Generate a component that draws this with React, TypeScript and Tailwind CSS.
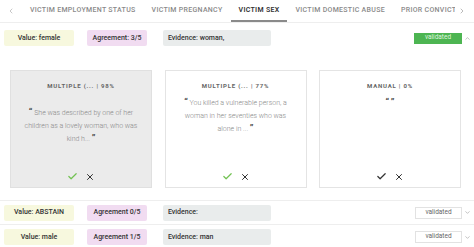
import { Check, X, ChevronLeft, ChevronRight, ChevronUp, ChevronDown } from 'lucide-react';

const tabs = [
  'VICTIM EMPLOYMENT STATUS',
  'VICTIM PREGNANCY',
  'VICTIM SEX',
  'VICTIM DOMESTIC ABUSE',
  'PRIOR CONVICTIONS',
];

type Card = {
  title: string;
  quote: string;
  selected?: boolean;
  accepted?: boolean;
};

const cards: Card[] = [
  {
    title: 'MULTIPLE (... | 98%',
    quote: 'She was described by one of her children as a lovely woman, who was kind h...',
    selected: true,
    accepted: true,
  },
  {
    title: 'MULTIPLE (... | 77%',
    quote: 'You killed a vulnerable person, a woman in her seventies who was alone in ...',
    accepted: true,
  },
  { title: 'MANUAL | 0%', quote: '' },
];

function SummaryRow({
  value,
  agreement,
  evidence,
  done,
  open,
}: {
  value: string;
  agreement: string;
  evidence: string;
  done: boolean;
  open?: boolean;
}) {
  return (
    <div className="flex items-center h-[16px] pl-[4px] pr-[2px]">
      <div className="w-[70px] h-full flex items-center justify-center bg-[#f7f8de] rounded-[2px] text-[7px] font-medium text-[#333]">
        {value}
      </div>
      <div className="ml-[13px] w-[60px] h-full flex items-center justify-center bg-[#f1dcf1] rounded-[2px] text-[7px] font-medium text-[#333]">
        {agreement}
      </div>
      <div className="ml-[16px] w-[108px] h-full flex items-center pl-[5px] bg-[#e9ecec] rounded-[2px] text-[7px] font-medium text-[#333]">
        {evidence}
      </div>
      <div className="flex-1" />
      {done ? (
        <div className="w-[48px] h-[11px] flex items-center justify-center bg-[#4db552] text-[6.5px] text-[#dff5df]">
          validated
        </div>
      ) : (
        <div className="w-[47px] h-[12px] flex items-center justify-center bg-white border border-[#e2e2e2] text-[6.5px] text-[#666]">
          validated
        </div>
      )}
      <div className="w-[10px] flex justify-center text-[#999]">
        {open ? <ChevronUp size={7} strokeWidth={2} /> : <ChevronDown size={7} strokeWidth={2} />}
      </div>
    </div>
  );
}

function EvidenceCard({ card }: { card: Card }) {
  return (
    <div
      className={`w-[142px] h-[118px] flex flex-col items-center border px-[11px] pt-[11px] pb-[5px] ${
        card.selected ? 'bg-[#ebebeb] border-[#e0e0e0]' : 'bg-white border-[#e4e4e4]'
      }`}
    >
      <div className="text-[6px] leading-[8px] font-bold tracking-[0.8px] text-[#666]">{card.title}</div>
      <p
        className={`text-center text-[7px] leading-[13px] font-light text-[#888] ${
          card.selected ? 'mt-[17px]' : 'mt-[7px]'
        }`}
      >
        <span className="text-[9px] leading-[0] font-bold text-[#444]">“</span>
        {card.quote ? ` ${card.quote} ` : ' '}
        <span className="text-[9px] leading-[0] font-bold text-[#444]">”</span>
      </p>
      <div className="mt-auto flex items-center gap-[7px]">
        <Check size={11} strokeWidth={2.6} className={card.accepted ? 'text-[#72c252]' : 'text-[#333]'} />
        <X size={10} strokeWidth={2.4} className="text-[#333]" />
      </div>
    </div>
  );
}

export default function App() {
  return (
    <div className="w-[474px] h-[247px] bg-white overflow-hidden font-['Roboto',sans-serif]">
      <div className="flex items-stretch h-[23px] border-b border-[#eeeeee]">
        <div className="w-[22px] shrink-0 flex items-center justify-center text-[#aaa]">
          <ChevronLeft size={8} strokeWidth={2} />
        </div>
        <div className="flex-1 flex overflow-hidden">
          {tabs.map((t) => (
            <div
              key={t}
              className={`px-[8px] shrink-0 whitespace-nowrap flex items-center text-[7px] tracking-[0.3px] ${
                t === 'VICTIM SEX'
                  ? 'font-semibold text-[#333] border-b-2 border-[#8a8a8a]'
                  : 'font-medium text-[#8a8a8a] border-b-2 border-transparent'
              }`}
            >
              {t}
            </div>
          ))}
        </div>
        <div className="w-[19px] shrink-0 flex items-center justify-start pl-[3px] text-[#999]">
          <ChevronRight size={8} strokeWidth={2} />
        </div>
      </div>

      <div className="pt-[7px] pb-[12px] border-b border-[#eeeeee]">
        <SummaryRow value="Value: female" agreement="Agreement: 3/5" evidence="Evidence: woman," done open />
        <div className="mt-[24px] pl-[10px] flex gap-[12.5px]">
          {cards.map((c) => (
            <EvidenceCard key={c.title} card={c} />
          ))}
        </div>
      </div>

      <div className="h-[24px] flex flex-col justify-center border-b border-[#eeeeee]">
        <SummaryRow value="Value: ABSTAIN" agreement="Agreement 0/5" evidence="Evidence:" done={false} />
      </div>
      <div className="h-[24px] flex flex-col justify-center">
        <SummaryRow value="Value: male" agreement="Agreement 1/5" evidence="Evidence: man" done={false} />
      </div>
    </div>
  );
}
